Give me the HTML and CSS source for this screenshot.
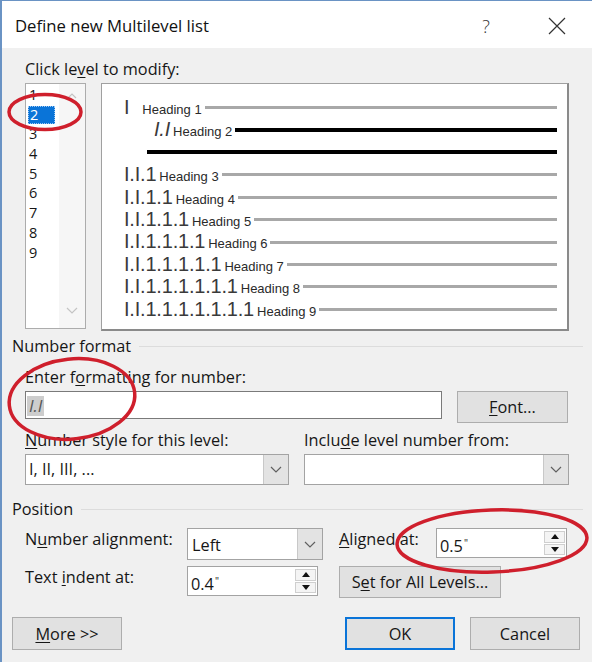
FILE: index.html
```html
<!DOCTYPE html>
<html>
<head>
<meta charset="utf-8">
<link rel="stylesheet" href="styles.css">
</head>
<body>
<div class="win">
  <div class="titlebar">
    <span class="title">Define new Multilevel list</span>
    <span class="help">?</span>
    <span class="close"><svg width="18" height="18" viewBox="0 0 18 18"><path d="M1 1L17 17M17 1L1 17" stroke="#333" stroke-width="1.2" fill="none"/></svg></span>
  </div>
  <div class="content">
    <div class="lbl lbl-click">Click le<u>v</u>el to modify:</div>
    <div class="top">
      <div class="listbox">
        <div class="items">
          <div class="item">1</div>
          <div class="item"><span class="sel">2</span></div>
          <div class="item">3</div>
          <div class="item">4</div>
          <div class="item">5</div>
          <div class="item">6</div>
          <div class="item">7</div>
          <div class="item">8</div>
          <div class="item">9</div>
        </div>
        <div class="scroll">
          <svg class="sc-up" width="10" height="6" viewBox="0 0 10 6"><path d="M1 5L5 1L9 5" stroke="#c4c4c4" stroke-width="1.2" fill="none"/></svg>
          <svg class="sc-down" width="12" height="7" viewBox="0 0 12 7"><path d="M1 1L6 6L11 1" stroke="#c4c4c4" stroke-width="1.2" fill="none"/></svg>
        </div>
      </div>
      <div class="preview">
        <div class="row r1"><span class="num">I</span><span class="hd hd1">Heading 1</span><span class="ln gray"></span></div>
        <div class="row r2"><span class="num it">I.I</span><span class="hd">Heading 2</span><span class="ln black"></span></div>
        <div class="row r3"><span class="ln black"></span></div>
        <div class="row"><span class="num">I.I.1</span><span class="hd">Heading 3</span><span class="ln gray"></span></div>
        <div class="row"><span class="num">I.I.1.1</span><span class="hd">Heading 4</span><span class="ln gray"></span></div>
        <div class="row"><span class="num">I.I.1.1.1</span><span class="hd">Heading 5</span><span class="ln gray"></span></div>
        <div class="row"><span class="num">I.I.1.1.1.1</span><span class="hd">Heading 6</span><span class="ln gray"></span></div>
        <div class="row"><span class="num">I.I.1.1.1.1.1</span><span class="hd">Heading 7</span><span class="ln gray"></span></div>
        <div class="row"><span class="num">I.I.1.1.1.1.1.1</span><span class="hd">Heading 8</span><span class="ln gray"></span></div>
        <div class="row"><span class="num">I.I.1.1.1.1.1.1.1</span><span class="hd">Heading 9</span><span class="ln gray"></span></div>
      </div>
    </div>

    <div class="group g-number"><span>Number format</span><span class="rule"></span></div>
    <div class="lbl ind lbl-enter">Enter f<u>o</u>rmatting for number:</div>
    <div class="inrow ind">
      <div class="textbox"><span class="seltext">I.I</span></div>
      <div class="btn btn-font"><u>F</u>ont...</div>
    </div>
    <div class="lblrow ind">
      <div class="lbl lcol"><u>N</u>umber style for this level:</div>
      <div class="lbl rcol">Inclu<u>d</u>e level number from:</div>
    </div>
    <div class="selrow ind">
      <div class="select sel-style"><span class="val">I, II, III, ...</span><span class="arrow"><svg width="12" height="7" viewBox="0 0 12 7"><path d="M1 1L6 6L11 1" stroke="#606060" stroke-width="1.2" fill="none"/></svg></span></div>
      <div class="select sel-incl"><span class="val"></span><span class="arrow"><svg width="12" height="7" viewBox="0 0 12 7"><path d="M1 1L6 6L11 1" stroke="#606060" stroke-width="1.2" fill="none"/></svg></span></div>
    </div>

    <div class="group g-pos"><span>Position</span><span class="rule"></span></div>
    <div class="posgrid ind">
      <div class="plbl">N<u>u</u>mber alignment:</div>
      <div class="select sel-align"><span class="val">Left</span><span class="arrow"><svg width="12" height="7" viewBox="0 0 12 7"><path d="M1 1L6 6L11 1" stroke="#606060" stroke-width="1.2" fill="none"/></svg></span></div>
      <div class="plbl"><u>A</u>ligned at:</div>
      <div class="spin spin-al"><span class="val">0.5<span class="inch">"</span></span><span class="spinbtns"><span class="sb"><svg width="8" height="5" viewBox="0 0 8 5"><path d="M0 5L4 0L8 5Z" fill="#111"/></svg></span><span class="sb"><svg width="8" height="5" viewBox="0 0 8 5"><path d="M0 0L4 5L8 0Z" fill="#111"/></svg></span></span></div>

      <div class="plbl">Text <u>i</u>ndent at:</div>
      <div class="spin spin-ind"><span class="val">0.4<span class="inch">"</span></span><span class="spinbtns"><span class="sb"><svg width="8" height="5" viewBox="0 0 8 5"><path d="M0 5L4 0L8 5Z" fill="#111"/></svg></span><span class="sb"><svg width="8" height="5" viewBox="0 0 8 5"><path d="M0 0L4 5L8 0Z" fill="#111"/></svg></span></span></div>
      <div class="spacer"></div>
      <div class="btn btn-set">S<u>e</u>t for All Levels...</div>
    </div>

    <div class="bottom">
      <div class="btn btn-more"><u>M</u>ore &gt;&gt;</div>
      <div class="grow"></div>
      <div class="btn btn-ok">OK</div>
      <div class="btn btn-cancel">Cancel</div>
    </div>
  </div>

  <svg class="annot" width="592" height="662" viewBox="0 0 592 662">
    <ellipse cx="45" cy="112" rx="36" ry="17.5" fill="none" stroke="#cf1f2c" stroke-width="3.5"/>
    <ellipse cx="72" cy="399" rx="63" ry="40" fill="none" stroke="#cf1f2c" stroke-width="3.5" transform="rotate(-6 72 399)"/>
    <ellipse cx="492" cy="541" rx="95" ry="31" fill="none" stroke="#cf1f2c" stroke-width="3.5" transform="rotate(-2 492 541)"/>
  </svg>
</div>
</body>
</html>
```

FILE: styles.css
```css
* { box-sizing: border-box; }
html, body { margin: 0; padding: 0; }
body {
  width: 592px;
  height: 662px;
  overflow: hidden;
  background: #f0f0f0;
  font-family: "Open Sans", "Noto Sans", sans-serif;
  font-size: 16.3px;
  color: #161616;
}
u { text-decoration: underline; text-underline-offset: 2px; }

.win {
  position: relative;
  width: 592px;
  height: 662px;
  background: #f0f0f0;
  border-left: 2px solid #6a93c4;
  border-top: 1px solid #6a93c4;
}

.titlebar {
  height: 47px;
  background: #fff;
  display: flex;
  align-items: center;
  padding-left: 13px;
  padding-right: 12px;
  padding-top: 2px;
}
.title { flex: 1; font-size: 16.7px; color: #111; }
.help { width: 30px; text-align: center; font-size: 18px; color: #333; margin-right: 33px; font-weight: 300; }
.close { width: 46px; display: flex; justify-content: center; }

.content { padding-left: 10px; }
.ind { margin-left: 13px; }

.lbl { line-height: 20px; height: 20px; white-space: nowrap; }
.lbl-click { margin-left: 13px; margin-top: 11px; }

.top { display: flex; margin-left: 13px; margin-top: 4px; height: 248px; }
.listbox {
  width: 61px;
  height: 246px;
  border: 1px solid #acacac;
  background: #fff;
  display: flex;
}
.items { width: 33px; padding-top: 1px; }
.item { height: 19.7px; line-height: 19.7px; padding-left: 3px; font-size: 14.5px; }
.sel {
  display: inline-block;
  width: 27px;
  height: 18px;
  line-height: 18px;
  margin-left: -1px;
  padding-left: 2px;
  background: #0a74d8;
  color: #fff;
  outline: 1px dotted #9cc8f5;
  outline-offset: -1px;
}
.scroll {
  flex: 1;
  background: #f6f6f6;
  display: flex;
  flex-direction: column;
  align-items: center;
  justify-content: space-between;
  padding: 9px 0 14px;
}

.preview {
  margin-left: 15px;
  width: 468px;
  height: 248px;
  background: #fff;
  border: 1px solid #a0a0a0;
  border-right: 2px solid #8a8a8a;
  border-bottom: 2px solid #8a8a8a;
  padding: 12px 10px 0 22px;
  font-family: "Liberation Sans", Arial, sans-serif;
}
.row { height: 22.4px; display: flex; align-items: baseline; }
.num { font-size: 20px; line-height: 22.4px; color: #3a3a3a; letter-spacing: -0.2px; }
.num.it { font-style: italic; }
.hd { font-size: 13px; color: #2a2a2a; margin-left: 3px; }
.hd1 { margin-left: 13px; }
.ln { flex: 1; align-self: center; margin-left: 3px; }
.ln.gray { height: 3px; background: #a8a8a8; margin-top: 1px; }
.ln.black { height: 4px; background: #000; }
.r2 { margin-left: 30px; }
.r3 { margin-left: 23px; }
.r3 .ln { margin-left: 0; }

.group { display: flex; align-items: center; line-height: 20px; height: 20px; }
.group .rule { flex: 1; height: 1px; background: #dcdcdc; margin-left: 8px; margin-right: 9px; }
.g-number { margin-top: 5px; }
.g-pos { margin-top: 14px; }
.lbl-enter { margin-top: 11px; }

.inrow { display: flex; align-items: flex-start; margin-top: 4px; height: 32px; }
.textbox {
  width: 417px;
  height: 28px;
  background: #fff;
  border: 1px solid #7a7a7a;
  padding: 3px 0 0 1px;
}
.seltext {
  display: inline-block;
  background: #cdcdcd;
  color: #555;
  font-style: italic;
  font-size: 17px;
  line-height: 20px;
  padding: 0 2px;
}

.btn {
  background: #e1e1e1;
  border: 1px solid #adadad;
  display: flex;
  align-items: center;
  justify-content: center;
  height: 32px;
  white-space: nowrap;
}
.btn-font { width: 111px; margin-left: 15px; }

.lblrow { display: flex; margin-top: 7px; }
.lcol { width: 279px; }
.selrow { display: flex; margin-top: 4px; gap: 15px; }

.select {
  height: 31px;
  background: #fff;
  border: 1px solid #a3a3a3;
  display: flex;
}
.select .val { flex: 1; padding-left: 3px; line-height: 29px; white-space: nowrap; }
.select .arrow {
  width: 25px;
  background: #e3e3e3;
  border-left: 1px solid #c8c8c8;
  display: flex;
  align-items: center;
  justify-content: center;
}
.sel-style { width: 264px; }
.sel-incl { width: 265px; }

.posgrid {
  margin-top: 9px;
  display: grid;
  grid-template-columns: 162px 136px 16px 97px 131px;
  grid-template-rows: 32px 32px;
  row-gap: 6px;
}
.plbl { line-height: 22px; white-space: nowrap; }
.posgrid .plbl:nth-child(3) { grid-column: 4; }
.posgrid .spin-al { grid-column: 5; }
.sel-align { height: 32px; grid-column: 2; }
.sel-align .val { line-height: 32px; padding-left: 4px; }
.spin {
  height: 30px;
  background: #fff;
  border: 1px solid #a3a3a3;
  display: flex;
}
.spin .val { flex: 1; padding-left: 3px; line-height: 28px; }
.inch { font-size: 10px; vertical-align: 5px; margin-left: 1px; }
.spinbtns {
  width: 22px;
  display: flex;
  flex-direction: column;
  padding: 2px 1px 2px 0;
  gap: 1px;
}
.sb {
  flex: 1;
  background: #f4f4f4;
  border: 1px solid #cfcfcf;
  display: flex;
  align-items: center;
  justify-content: center;
}
.spin-ind { width: 131px; grid-column: 2; }
.posgrid .spacer { grid-column: 3; }
.btn-set { grid-column: 4 / 6; width: 162px; }

.bottom { display: flex; margin-top: 19px; height: 33px; padding-right: 12px; }
.grow { flex: 1; }
.btn-more { width: 110px; height: 33px; }
.btn-ok { width: 110px; height: 33px; border: 2px solid #0a74d8; }
.btn-cancel { width: 110px; height: 33px; margin-left: 15px; }

.annot { position: absolute; left: -2px; top: -1px; pointer-events: none; }
```
